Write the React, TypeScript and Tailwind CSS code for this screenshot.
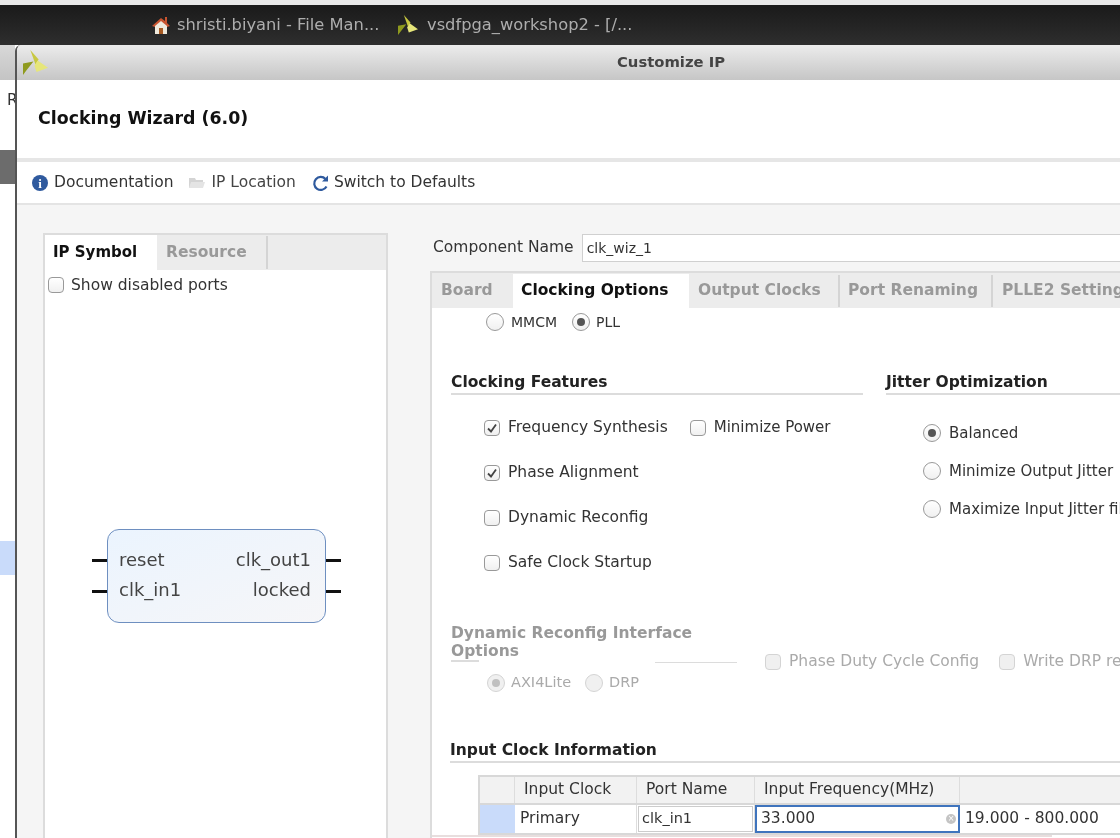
import React from "react";

const Check = ({ on, off }: { on?: boolean; off?: boolean }) => (
  <span className={`flex h-[16px] w-[16px] shrink-0 items-center justify-center rounded-[4px] border ${off ? "border-[#d4d4d4] bg-[#f0f0f0]" : "border-[#999] bg-gradient-to-b from-white to-[#f0f0f0]"}`}>
    {on && (
      <svg width="12" height="12" viewBox="0 0 12 12" fill="none">
        <path d="M2 6.5 L5 9.5 L10 2.5" stroke="#444" strokeWidth="1.8" />
      </svg>
    )}
  </span>
);

const Radio = ({ on, off }: { on?: boolean; off?: boolean }) => (
  <span className={`flex h-[18px] w-[18px] shrink-0 items-center justify-center rounded-full border ${off ? "border-[#d4d4d4] bg-[#f0f0f0]" : "border-[#999] bg-gradient-to-b from-white to-[#f0f0f0]"}`}>
    {on && <span className={`h-[8px] w-[8px] rounded-full ${off ? "bg-[#c0c0c0]" : "bg-[#555]"}`} />}
  </span>
);

const Logo = ({ size }: { size: number }) => (
  <svg width={size} height={size} viewBox="0 0 24 24">
    <path d="M7 0 L15 9 L12 14 Z" fill="#c8c840" />
    <path d="M0 24 L0 13 L10 11 L3 20 Z" fill="#8f9a1e" />
    <path d="M11 15 L14 10 L24 17 L13 21 Z" fill="#e6e67a" />
  </svg>
);

const House = () => (
  <svg width="18" height="20" viewBox="0 0 18 20">
    <path d="M0 11 L9 3 L13 6 L13 2 L15 2 L15 8 L18 11 L15 12 L3 12 Z" fill="#c9542f" />
    <path d="M3 11 L9 6 L15 11 L15 19 L3 19 Z" fill="#efe9dc" />
    <rect x="7" y="13" width="4" height="6" fill="#a85a22" />
  </svg>
);

const Section = ({ title, w, className = "" }: { title: string; w: string; className?: string }) => (
  <div className={`border-b-2 border-[#dcdcdc] pb-[2px] text-[15.5px] font-bold leading-[18px] text-[#222] ${w} ${className}`}>{title}</div>
);

const Item = ({ children, h, className = "" }: { children: React.ReactNode; h: string; className?: string }) => (
  <div className={`flex items-center gap-[8px] ${h} ${className}`}>{children}</div>
);

const Stub = () => <span className="block h-[3px] w-[15px] bg-[#111]" />;

export default function App() {
  return (
    <div className="flex h-[838px] w-[1120px] flex-col overflow-hidden bg-white text-[15.5px] text-[#333] [font-family:'DejaVu_Sans',sans-serif] blur-[0.4px]">
      <div className="h-[5px] shrink-0 bg-[#e8e8e8]" />
      <div className="flex h-[40px] shrink-0 items-center bg-gradient-to-b from-[#1a1a1a] to-[#2e2e2e] pl-[152px] text-[16.3px] text-[#adadad]">
        <div className="flex w-[246px] items-center gap-[7px]">
          <House />
          <span>shristi.biyani - File Man...</span>
        </div>
        <div className="flex items-center gap-[9px]">
          <Logo size={20} />
          <span>vsdfpga_workshop2 - [/...</span>
        </div>
      </div>
      <div className="flex min-h-0 flex-1">
        {/* Window behind the dialog */}
        <div className="flex w-[15px] shrink-0 flex-col overflow-hidden">
          <div className="h-[35px] bg-gradient-to-b from-[#d8d8d8] to-[#c4c4c4]" />
          <div className="h-[70px] bg-white pl-[7px] pt-[10px] leading-[20px]">R</div>
          <div className="h-[34px] bg-[#6c6c6c]" />
          <div className="h-[357px] bg-white" />
          <div className="h-[34px] bg-[#c9dbfa]" />
          <div className="flex-1 bg-white" />
        </div>
        {/* Dialog */}
        <div className="flex min-w-0 flex-1 flex-col overflow-hidden rounded-tl-[6px] border-l-2 border-[#555] bg-[#f5f5f5]">
          <div className="flex h-[35px] shrink-0 items-center bg-gradient-to-b from-[#ececec] to-[#c6c6c6] pl-[6px]">
            <Logo size={25} />
            <div className="ml-[569px] text-[14.8px] font-bold text-[#444]">Customize IP</div>
          </div>
          <div className="flex h-[78px] shrink-0 items-center bg-white pb-[1px] pl-[21px] text-[17.4px] font-bold text-[#111]">Clocking Wizard (6.0)</div>
          <div className="h-[4px] shrink-0 bg-[#e6e6e6]" />
          <div className="flex h-[41px] shrink-0 items-center bg-white pl-[15px] pt-[1px] text-[#333]">
            <span className="flex items-center gap-[6px]">
              <span className="flex h-[16px] w-[16px] items-center justify-center rounded-full bg-[#2f5a9e] text-[13px] font-bold leading-none text-white [font-family:'Liberation_Serif',serif]">i</span>
              Documentation
            </span>
            <span className="ml-[14px] flex items-center gap-[6px] text-[#444]">
              <svg width="18" height="14" viewBox="0 0 18 14">
                <path d="M1 2 H7 L8 4 H15 V12 H1 Z" fill="#d4d4d4" />
                <path d="M3 6 H17 L15 12 H1 Z" fill="#e4e4e4" />
              </svg>
              IP Location
            </span>
            <span className="ml-[16px] flex items-center gap-[4px]">
              <svg width="18" height="18" viewBox="0 0 18 18" fill="none">
                <path d="M13.5 5 A6.5 6.5 0 1 0 14.5 12.5" stroke="#2f5a9e" strokeWidth="2.2" />
                <path d="M16 1.5 V7.5 H10 Z" fill="#2f5a9e" />
              </svg>
              Switch to Defaults
            </span>
          </div>
          <div className="h-[2px] shrink-0 bg-[#e4e4e4]" />
          <div className="flex min-h-0 flex-1 pl-[26px] pt-[28px]">
            {/* Left panel */}
            <div className="flex w-[345px] shrink-0 flex-col border-2 border-b-0 border-[#dcdcdc] bg-white">
              <div className="flex h-[35px] shrink-0 bg-[#ececec] font-bold">
                <div className="flex w-[112px] items-center bg-white pl-[8px] text-[15px] text-[#111]">IP Symbol</div>
                <div className="my-[1px] flex w-[111px] items-center border-r-2 border-[#d4d4d4] pl-[9px] text-[#999]">Resource</div>
              </div>
              <label className="mt-[6px] flex items-center gap-[7px] pl-[3px] leading-[18px]">
                <Check />
                Show disabled ports
              </label>
              <div className="mt-[235px] flex items-center pl-[47px]">
                <div className="flex flex-col gap-[28px]"><Stub /><Stub /></div>
                <div className="flex h-[94px] w-[219px] flex-col justify-center gap-[7px] rounded-[12px] border border-[#6e8fc0] bg-gradient-to-br from-[#ebf4fe] to-[#f6f6f8] pb-[3px] pl-[11px] pr-[14px] text-[18px] leading-[23px] text-[#444]">
                  <div className="flex justify-between"><span>reset</span><span>clk_out1</span></div>
                  <div className="flex justify-between"><span>clk_in1</span><span>locked</span></div>
                </div>
                <div className="flex flex-col gap-[28px]"><Stub /><Stub /></div>
              </div>
            </div>
            {/* Right panel */}
            <div className="ml-[42px] flex min-w-0 flex-1 flex-col">
              <div className="flex h-[29px] shrink-0 items-center gap-[8px] whitespace-nowrap pl-[3px]">
                <span className="pt-[1px]">Component Name</span>
                <div className="flex h-[28px] w-[600px] shrink-0 items-center border border-[#d0d0d0] bg-white pl-[4px] pt-[1px] text-[14px]">clk_wiz_1</div>
              </div>
              <div className="mt-[9px] flex min-h-0 flex-1 flex-col border-l-2 border-t-2 border-[#dcdcdc] bg-white">
                <div className="flex h-[35px] w-[760px] shrink-0 whitespace-nowrap bg-[#ececec] pt-[1px] font-bold text-[#999]">
                  <div className="flex w-[81px] shrink-0 items-center pl-[9px]">Board</div>
                  <div className="flex w-[176px] shrink-0 items-center bg-white pl-[8px] text-[#111]">Clocking Options</div>
                  <div className="my-[1px] flex w-[151px] shrink-0 items-center border-r-2 border-[#d4d4d4] pl-[9px]">Output Clocks</div>
                  <div className="my-[1px] flex w-[153px] shrink-0 items-center border-r-2 border-[#d4d4d4] pl-[8px]">Port Renaming</div>
                  <div className="flex items-center pl-[9px]">PLLE2 Settings</div>
                </div>
                <div className="flex h-[28px] items-center pl-[54px] text-[14px]">
                  <Radio /><span className="ml-[7px]">MMCM</span>
                  <span className="ml-[15px]"><Radio on /></span><span className="ml-[6px]">PLL</span>
                </div>
                <div className="mt-[37px] flex pl-[19px]">
                  <div className="w-[412px] shrink-0">
                    <Section title="Clocking Features" w="w-[412px]" />
                    <div className="pl-[33px] pt-[10px]">
                      <Item h="h-[45px]">
                        <Check on /><span>Frequency Synthesis</span>
                        <span className="ml-[14px]"><Check /></span><span className="text-[15px]">Minimize Power</span>
                      </Item>
                      <Item h="h-[45px]"><Check on /><span>Phase Alignment</span></Item>
                      <Item h="h-[45px]"><Check /><span>Dynamic Reconfig</span></Item>
                      <Item h="h-[45px]"><Check /><span>Safe Clock Startup</span></Item>
                    </div>
                  </div>
                  <div className="ml-[23px] flex-1 whitespace-nowrap text-[15px]">
                    <Section title="Jitter Optimization" w="w-[300px]" />
                    <div className="pl-[37px] pt-[19px]">
                      <Item h="h-[38px]" className="gap-[3px]"><Radio on /><span>Balanced</span></Item>
                      <Item h="h-[38px]" className="gap-[3px]"><Radio /><span>Minimize Output Jitter</span></Item>
                      <Item h="h-[38px]" className="gap-[3px]"><Radio /><span>Maximize Input Jitter filter</span></Item>
                    </div>
                  </div>
                </div>
                <div className="mt-[39px] flex whitespace-nowrap pl-[19px] text-[#aaa]">
                  <div className="w-[204px] shrink-0 font-bold leading-[18px] text-[#999]">
                    Dynamic Reconfig Interface
                    <div className="flex items-end">
                      <span className="w-[28px] border-b-2 border-[#dcdcdc]">Options</span>
                    </div>
                  </div>
                  <div className="mt-[38px] h-[1px] w-[82px] shrink-0 bg-[#dcdcdc]" />
                  <div className="ml-[28px] mt-[27px] flex h-[22px] items-center gap-[8px]">
                    <Check off /><span>Phase Duty Cycle Config</span>
                    <span className="ml-[12px]"><Check off /></span><span>Write DRP registers</span>
                  </div>
                </div>
                <div className="flex h-[20px] items-center pl-[55px] text-[14.5px] text-[#aaa]">
                  <Radio on off /><span className="ml-[6px]">AXI4Lite</span>
                  <span className="ml-[14px]"><Radio off /></span><span className="ml-[6px]">DRP</span>
                </div>
                <Section title="Input Clock Information" w="ml-[18px] mt-[48px] w-[700px]" />
                <div className="ml-[46px] mt-[12px] w-[700px] whitespace-nowrap border-l-2 border-t-2 border-[#d8d8d8] bg-white">
                  <div className="flex h-[28px] items-center border-b-2 border-[#d8d8d8] bg-[#f2f2f2]">
                    <div className="h-full w-[35px] border-r border-[#ddd]" />
                    <div className="flex h-full w-[122px] items-center border-r border-[#ddd] pl-[9px]">Input Clock</div>
                    <div className="flex h-full w-[118px] items-center border-r border-[#ddd] pl-[9px]">Port Name</div>
                    <div className="flex h-full w-[205px] items-center border-r border-[#ddd] pl-[9px]">Input Frequency(MHz)</div>
                  </div>
                  <div className="flex h-[30px] items-center border-b-2 border-[#d8d8d8]">
                    <div className="h-full w-[35px] bg-[#c9dbfa]" />
                    <div className="flex h-full w-[122px] items-center border-r border-[#ddd] pl-[5px]">Primary</div>
                    <div className="flex h-full w-[118px] items-center border-r border-[#ddd] p-[1px] text-[14.5px]">
                      <div className="flex h-full w-full items-center border border-[#ccc] pl-[3px]">clk_in1</div>
                    </div>
                    <div className="flex h-full w-[205px] items-center justify-between border-2 border-[#3f74bd] pl-[4px] pr-[2px]">
                      33.000
                      <span className="flex h-[10px] w-[10px] items-center justify-center rounded-full bg-[#c4c4c4] text-[8px] leading-none text-white">×</span>
                    </div>
                    <div className="pl-[5px]">19.000 - 800.000</div>
                  </div>
                </div>
                <div className="h-[2px] w-[620px] bg-[#e8dede]" />
              </div>
            </div>
          </div>
        </div>
      </div>
    </div>
  );
}
